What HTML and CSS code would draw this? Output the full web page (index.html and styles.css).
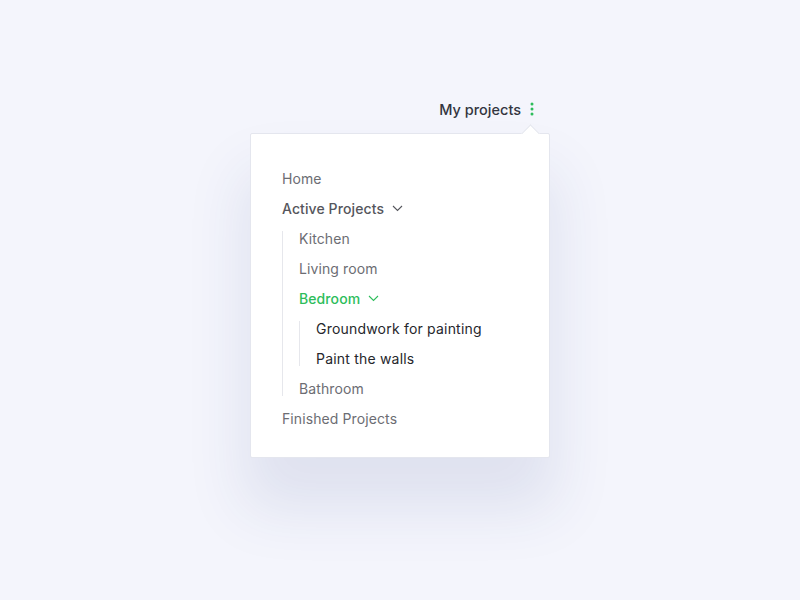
FILE: index.html
```html
<!DOCTYPE html>
<html>
<head>
<meta charset="utf-8">
<link rel="stylesheet" href="styles.css">
</head>
<body>
<div class="stage">
  <div class="menu-wrap">
    <div class="trigger">
      <span class="trigger-label">My projects</span>
      <svg class="dots" width="4" height="14" viewBox="0 0 4 14"><circle cx="2" cy="2" r="1.5"/><circle cx="2" cy="7" r="1.5"/><circle cx="2" cy="12" r="1.5"/></svg>
    </div>
    <div class="card">
      <span class="notch"></span>
      <ul class="list">
        <li class="item">Home</li>
        <li class="item parent">Active Projects <svg class="chev" width="11" height="7" viewBox="0 0 11 7"><path d="M1 1l4.5 4.5L10 1"/></svg></li>
        <li>
          <ul class="list sub">
            <li class="item">Kitchen</li>
            <li class="item">Living room</li>
            <li class="item active">Bedroom <svg class="chev" width="11" height="7" viewBox="0 0 11 7"><path d="M1 1l4.5 4.5L10 1"/></svg></li>
            <li>
              <ul class="list sub sub2">
                <li class="item leaf">Groundwork for painting</li>
                <li class="item leaf">Paint the walls</li>
              </ul>
            </li>
            <li class="item">Bathroom</li>
          </ul>
        </li>
        <li class="item">Finished Projects</li>
      </ul>
    </div>
  </div>
</div>
</body>
</html>
```
FILE: styles.css
```css
html, body {
  margin: 0;
  padding: 0;
  background: #f4f5fc;
  font-family: Inter, "Noto Sans", sans-serif;
}
.stage {
  width: 800px;
  height: 600px;
  display: flex;
  justify-content: center;
  padding-top: 97px;
  box-sizing: border-box;
}
.menu-wrap {
  width: 300px;
  display: flex;
  flex-direction: column;
  align-items: flex-end;
}
.trigger {
  display: flex;
  align-items: center;
  gap: 9px;
  height: 24px;
  margin-right: 16px;
}
.trigger-label {
  font-size: 14.5px;
  font-weight: 500;
  color: #333540;
}
.dots {
  fill: #2dbd5b;
}
.card {
  position: relative;
  margin-top: 12px;
  width: 300px;
  box-sizing: border-box;
  background: #fff;
  border: 1px solid #e4e6ee;
  border-radius: 2px;
  padding: 29px 31px 24px;
  box-shadow: 0 45px 60px 6px rgba(40, 60, 130, 0.10);
}
.notch {
  position: absolute;
  top: -7px;
  right: 12px;
  width: 12px;
  height: 12px;
  background: #fff;
  border-top: 1px solid #e4e6ee;
  border-left: 1px solid #e4e6ee;
  transform: rotate(45deg);
}
.list {
  list-style: none;
  margin: 0;
  padding: 0;
}
.item {
  height: 30px;
  display: flex;
  align-items: center;
  gap: 8px;
  font-size: 14px;
  letter-spacing: 0.1px;
  color: #6c6d73;
}
.parent {
  color: #55565c;
  font-weight: 500;
}
.chev {
  fill: none;
  stroke: currentColor;
  stroke-width: 1.1;
}
.sub {
  padding-left: 17px;
  background: linear-gradient(#e6e7ec, #e6e7ec) no-repeat 0 8px / 1px calc(100% - 15px);
}
.active {
  color: #2dbd5b;
  font-weight: 500;
}
.leaf {
  color: #26272c;
  letter-spacing: 0.2px;
}
```
